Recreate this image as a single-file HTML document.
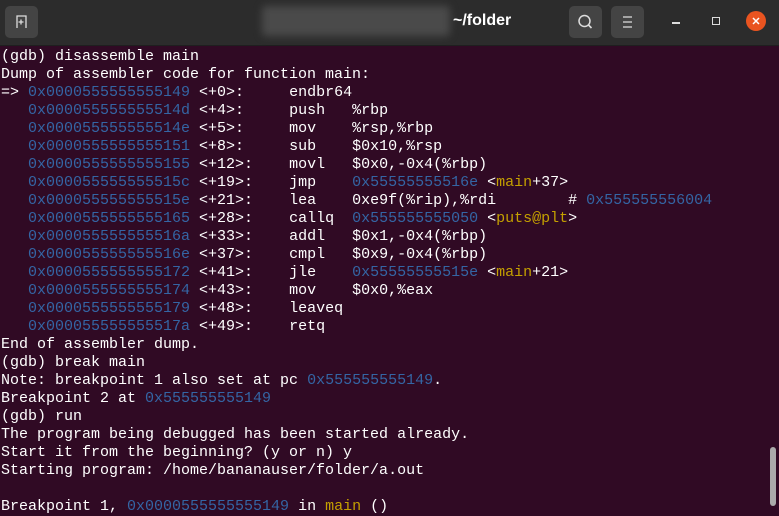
<!DOCTYPE html>
<html><head><style>
body{margin:0;width:779px;height:516px;overflow:hidden;background:#300a24;}
.tb{position:absolute;left:0;top:0;width:779px;height:45px;background:#2c2c2c;border-bottom:1px solid #1f1f1f;}
.btn{position:absolute;top:6px;width:33px;height:32px;background:#444;border-radius:5px;}
.blur{position:absolute;left:262px;top:6px;width:188px;height:30px;background:#4a4a4a;filter:blur(4px);border-radius:4px;}
.title{position:absolute;left:453px;top:12px;color:#fff;font:bold 16px "Liberation Sans",sans-serif;}
pre{position:absolute;left:1px;top:48px;margin:0;font:15px/18px "Liberation Mono",monospace;color:#fff;}
.b{color:#3465a4}.y{color:#c4a000}
.sb{position:absolute;left:770px;top:447px;width:6px;height:59px;background:#aaa;border-radius:3px;}
</style></head><body>
<div class="tb">
<div class="btn" style="left:5px"><svg width="33" height="32"><path d="M12 22V10h9v12M13.5 16h5M16 13.5v5" stroke="#ddd" stroke-width="1.3" fill="none"/></svg></div>
<div class="blur"></div>
<div class="title">~/folder</div>
<div class="btn" style="left:569px"><svg width="33" height="32"><circle cx="15.5" cy="15" r="5.5" stroke="#ddd" stroke-width="1.5" fill="none"/><path d="M19.5 19l3 3" stroke="#ddd" stroke-width="1.6"/></svg></div>
<div class="btn" style="left:611px"><svg width="33" height="32"><path d="M12 11h9M12 16h9M12 21h9" stroke="#ddd" stroke-width="1.3"/></svg></div>
<div style="position:absolute;left:672px;top:22px;width:8px;height:1.5px;background:#ddd"></div>
<div style="position:absolute;left:712px;top:17px;width:6px;height:6px;border:1.5px solid #ddd"></div>
<div style="position:absolute;left:746px;top:11px;width:20px;height:20px;border-radius:50%;background:#e95420"><svg width="20" height="20"><path d="M7 7l6 6M13 7l-6 6" stroke="#fff" stroke-width="1.5"/></svg></div>
</div>
<pre>(gdb) disassemble main
Dump of assembler code for function main:
=&gt; <span class="b">0x0000555555555149</span> &lt;+0&gt;:     endbr64 
   <span class="b">0x000055555555514d</span> &lt;+4&gt;:     push   %rbp
   <span class="b">0x000055555555514e</span> &lt;+5&gt;:     mov    %rsp,%rbp
   <span class="b">0x0000555555555151</span> &lt;+8&gt;:     sub    $0x10,%rsp
   <span class="b">0x0000555555555155</span> &lt;+12&gt;:    movl   $0x0,-0x4(%rbp)
   <span class="b">0x000055555555515c</span> &lt;+19&gt;:    jmp    <span class="b">0x55555555516e</span> &lt;<span class="y">main</span>+37&gt;
   <span class="b">0x000055555555515e</span> &lt;+21&gt;:    lea    0xe9f(%rip),%rdi        # <span class="b">0x555555556004</span>
   <span class="b">0x0000555555555165</span> &lt;+28&gt;:    callq  <span class="b">0x555555555050</span> &lt;<span class="y">puts@plt</span>&gt;
   <span class="b">0x000055555555516a</span> &lt;+33&gt;:    addl   $0x1,-0x4(%rbp)
   <span class="b">0x000055555555516e</span> &lt;+37&gt;:    cmpl   $0x9,-0x4(%rbp)
   <span class="b">0x0000555555555172</span> &lt;+41&gt;:    jle    <span class="b">0x55555555515e</span> &lt;<span class="y">main</span>+21&gt;
   <span class="b">0x0000555555555174</span> &lt;+43&gt;:    mov    $0x0,%eax
   <span class="b">0x0000555555555179</span> &lt;+48&gt;:    leaveq 
   <span class="b">0x000055555555517a</span> &lt;+49&gt;:    retq   
End of assembler dump.
(gdb) break main
Note: breakpoint 1 also set at pc <span class="b">0x555555555149</span>.
Breakpoint 2 at <span class="b">0x555555555149</span>
(gdb) run
The program being debugged has been started already.
Start it from the beginning? (y or n) y
Starting program: /home/bananauser/folder/a.out 

Breakpoint 1, <span class="b">0x0000555555555149</span> in <span class="y">main</span> ()</pre>
<div class="sb"></div>
</body></html>
